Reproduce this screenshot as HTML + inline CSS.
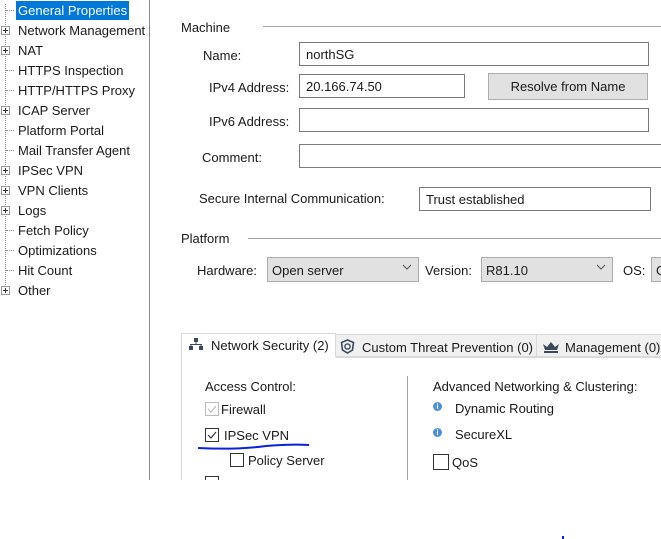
<!DOCTYPE html>
<html><head><style>
body{margin:0;width:661px;height:539px;background:#fff;font-family:"Liberation Sans",sans-serif;font-size:13px;color:#1a1a1a;position:relative;overflow:hidden}
.a{position:absolute;white-space:nowrap}
.box{position:absolute;border:1px solid #7a7a7a;background:#fff;box-sizing:border-box;padding:4px 6px}
.cb{position:absolute;width:14px;height:14px;border:1px solid #333;box-sizing:border-box;background:#fff}
.plus{position:absolute;width:9px;height:9px;border:1px solid #999;box-sizing:border-box;background:#fff}
.plus:before{content:"";position:absolute;left:1px;top:3px;width:5px;height:1px;background:#333}
.plus:after{content:"";position:absolute;left:3px;top:1px;width:1px;height:5px;background:#333}
.dot{position:absolute;border-top:1px dotted #888;width:8px}
.combo{position:absolute;background:#e1e1e1;border:1px solid #adadad;box-sizing:border-box;padding:5px 4px}
.arr{position:absolute;right:6px;top:6px}
.info{position:absolute;width:9px;height:9px;border-radius:50%;background:#4a90d9;color:#fff;font-size:8px;line-height:9px;text-align:center;font-weight:bold}
</style></head><body>
<div class="a" style="left:5px;top:4px;height:287px;border-left:1px dotted #888"></div>
<div class="a" style="left:149px;top:0;height:480px;border-left:1px solid #8a8a8a"></div>
<div class="a" style="left:16px;top:1px;width:113px;height:19px;background:#0078d7"></div>
<div class="a" style="left:18px;top:3px;color:#fff">General Properties</div>
<div class="dot" style="left:6px;top:10px"></div>
<div class="plus" style="left:1px;top:26px"></div><div class="a" style="left:18px;top:23px">Network Management</div>
<div class="plus" style="left:1px;top:46px"></div><div class="a" style="left:18px;top:43px">NAT</div>
<div class="dot" style="left:6px;top:70px"></div><div class="a" style="left:18px;top:63px">HTTPS Inspection</div>
<div class="dot" style="left:6px;top:90px"></div><div class="a" style="left:18px;top:83px">HTTP/HTTPS Proxy</div>
<div class="plus" style="left:1px;top:106px"></div><div class="a" style="left:18px;top:103px">ICAP Server</div>
<div class="dot" style="left:6px;top:130px"></div><div class="a" style="left:18px;top:123px">Platform Portal</div>
<div class="dot" style="left:6px;top:150px"></div><div class="a" style="left:18px;top:143px">Mail Transfer Agent</div>
<div class="plus" style="left:1px;top:166px"></div><div class="a" style="left:18px;top:163px">IPSec VPN</div>
<div class="plus" style="left:1px;top:186px"></div><div class="a" style="left:18px;top:183px">VPN Clients</div>
<div class="plus" style="left:1px;top:206px"></div><div class="a" style="left:18px;top:203px">Logs</div>
<div class="dot" style="left:6px;top:230px"></div><div class="a" style="left:18px;top:223px">Fetch Policy</div>
<div class="dot" style="left:6px;top:250px"></div><div class="a" style="left:18px;top:243px">Optimizations</div>
<div class="dot" style="left:6px;top:270px"></div><div class="a" style="left:18px;top:263px">Hit Count</div>
<div class="plus" style="left:1px;top:286px"></div><div class="a" style="left:18px;top:283px">Other</div>

<div class="a" style="left:181px;top:20px">Machine</div>
<div class="a" style="left:263px;top:26px;width:398px;border-top:1px solid #a0a0a0"></div>
<div class="a" style="left:203px;top:48px">Name:</div>
<div class="box" style="left:299px;top:42px;width:350px;height:24px">northSG</div>
<div class="a" style="left:209px;top:80px">IPv4 Address:</div>
<div class="box" style="left:299px;top:74px;width:166px;height:24px">20.166.74.50</div>
<div class="a" style="left:488px;top:73px;width:160px;height:27px;background:#e1e1e1;border:1px solid #adadad;box-sizing:border-box;text-align:center;line-height:26px">Resolve from Name</div>
<div class="a" style="left:209px;top:114px">IPv6 Address:</div>
<div class="box" style="left:299px;top:108px;width:350px;height:24px"></div>
<div class="a" style="left:202px;top:150px">Comment:</div>
<div class="box" style="left:299px;top:144px;width:380px;height:24px"></div>
<div class="a" style="left:199px;top:191px">Secure Internal Communication:</div>
<div class="box" style="left:419px;top:187px;width:232px;height:24px">Trust established</div>

<div class="a" style="left:181px;top:231px">Platform</div>
<div class="a" style="left:248px;top:238px;width:413px;border-top:1px solid #a0a0a0"></div>
<div class="a" style="left:197px;top:263px">Hardware:</div>
<div class="combo" style="left:267px;top:257px;width:152px;height:25px">Open server<svg class="arr" width="10" height="7"><path d="M1 1 L5 5 L9 1" stroke="#555" fill="none"/></svg></div>
<div class="a" style="left:425px;top:263px">Version:</div>
<div class="combo" style="left:481px;top:257px;width:132px;height:25px">R81.10<svg class="arr" width="10" height="7"><path d="M1 1 L5 5 L9 1" stroke="#555" fill="none"/></svg></div>
<div class="a" style="left:623px;top:263px">OS:</div>
<div class="combo" style="left:651px;top:257px;width:30px;height:25px">G</div>

<div class="a" style="left:335px;top:334px;width:330px;height:23px;background:#f0f0f0;border:1px solid #d9d9d9;box-sizing:border-box"></div>
<div class="a" style="left:536px;top:334px;height:23px;border-left:1px solid #d9d9d9"></div>
<div class="a" style="left:181px;top:333px;width:155px;height:150px;border:1px solid #d9d9d9;border-bottom:none;border-right:none;box-sizing:border-box;background:#fff"></div>
<div class="a" style="left:335px;top:333px;height:24px;border-left:1px solid #d9d9d9"></div>
<div class="a" style="left:336px;top:357px;width:330px;border-top:1px solid #d9d9d9"></div>
<svg class="a" style="left:189px;top:338px" width="14" height="13"><rect x="5" y="0" width="4" height="4" fill="#3a4a5c"/><rect x="6.5" y="4" width="1" height="3" fill="#3a4a5c"/><rect x="1" y="6" width="12" height="1" fill="#3a4a5c"/><rect x="0" y="8" width="4" height="4" fill="#3a4a5c"/><rect x="10" y="8" width="4" height="4" fill="#3a4a5c"/><rect x="1.5" y="6" width="1" height="2" fill="#3a4a5c"/><rect x="11.5" y="6" width="1" height="2" fill="#3a4a5c"/></svg>
<div class="a" style="left:211px;top:338px">Network Security (2)</div>
<svg class="a" style="left:340px;top:339px" width="15" height="15"><path d="M7.5 1 L13.5 3.5 L12.5 11 L7.5 14 L2.5 11 L1.5 3.5 Z" fill="none" stroke="#3a4a5c" stroke-width="1.6"/><circle cx="7.5" cy="7.5" r="2.6" fill="none" stroke="#3a4a5c" stroke-width="1.4"/></svg>
<div class="a" style="left:362px;top:340px">Custom Threat Prevention (0)</div>
<svg class="a" style="left:542px;top:341px" width="18" height="12"><path d="M1 3 L5 6 L9 1 L13 6 L17 3 L15 9 L3 9 Z" fill="#3a4a5c"/><rect x="2" y="10" width="14" height="2" fill="#3a4a5c"/></svg>
<div class="a" style="left:565px;top:340px">Management (0)</div>

<div class="a" style="left:205px;top:379px">Access Control:</div>
<div class="cb" style="left:205px;top:402px;border-color:#bbb"></div>
<svg class="a" style="left:206px;top:403px" width="12" height="12"><path d="M2 6 L5 9 L10 3" stroke="#bbb" fill="none" stroke-width="1.2"/></svg>
<div class="a" style="left:221px;top:402px">Firewall</div>
<div class="cb" style="left:205px;top:428px"></div>
<svg class="a" style="left:206px;top:429px" width="12" height="12"><path d="M2 6 L5 9 L10 3" stroke="#333" fill="none" stroke-width="1.2"/></svg>
<div class="a" style="left:224px;top:428px">IPSec VPN</div>
<svg class="a" style="left:196px;top:440px" width="115" height="12"><path d="M2 8 Q40 10 70 6 Q95 4 113 5" stroke="#0a22d8" stroke-width="2" fill="none"/></svg>
<div class="cb" style="left:230px;top:453px"></div>
<div class="a" style="left:248px;top:453px">Policy Server</div>
<div class="cb" style="left:205px;top:476px"></div>
<div class="a" style="left:407px;top:376px;height:105px;border-left:1px solid #a0a0a0"></div>
<div class="a" style="left:433px;top:379px">Advanced Networking &amp; Clustering:</div>
<div class="info" style="left:433px;top:402px">i</div>
<div class="a" style="left:455px;top:401px">Dynamic Routing</div>
<div class="info" style="left:433px;top:428px">i</div>
<div class="a" style="left:455px;top:427px">SecureXL</div>
<div class="cb" style="left:433px;top:454px;width:16px;height:16px"></div>
<div class="a" style="left:452px;top:455px">QoS</div>
<div class="a" style="left:0;top:480px;width:661px;height:59px;background:#fff"></div>
<div class="a" style="left:562px;top:536px;width:2px;height:3px;background:#0a22d8"></div>
</body></html>
